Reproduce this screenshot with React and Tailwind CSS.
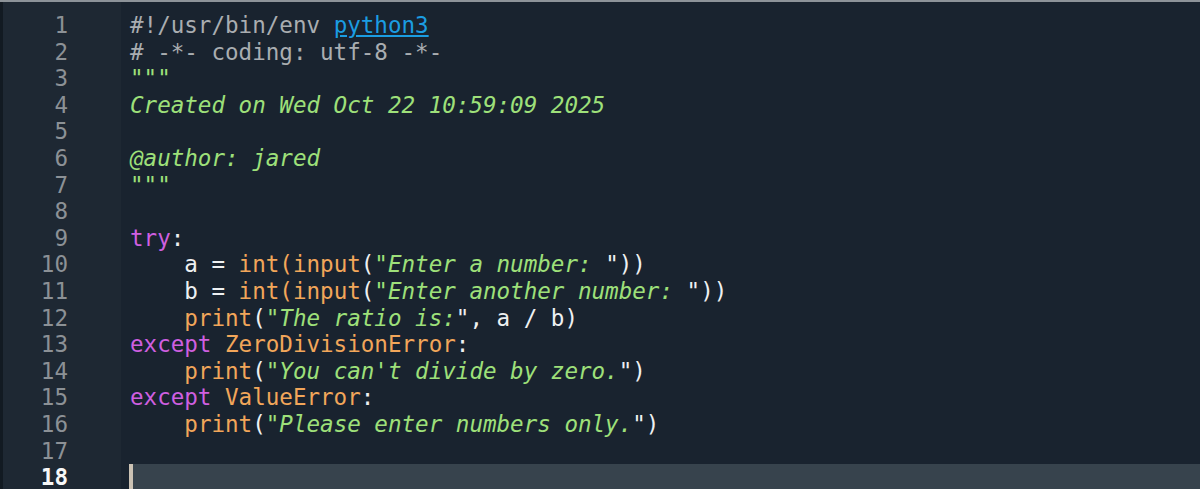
import React from 'react';

// token colours taken from the editor theme
const C = {
  cmt: 'text-[#a9adb1]',
  link: 'text-[#1b9de2] underline underline-offset-2',
  str: 'text-[#9ee07a] italic',
  kw: 'text-[#cf5fe0]',
  fn: 'text-[#f2a65a]',
  txt: 'text-[#eef0f2]',
};

const lines = [
  [['#!/usr/bin/env ', C.cmt], ['python3', C.link]],
  [['# -*- coding: utf-8 -*-', C.cmt]],
  [['"""', C.str]],
  [['Created on Wed Oct 22 10:59:09 2025', C.str]],
  [],
  [['@author: jared', C.str]],
  [['"""', C.str]],
  [],
  [['try', C.kw], [':', C.txt]],
  [['    a = ', C.txt], ['int(input', C.fn], ['(', C.txt], ['"Enter a number: ', C.str], ['"))', C.txt]],
  [['    b = ', C.txt], ['int(input', C.fn], ['(', C.txt], ['"Enter another number: ', C.str], ['"))', C.txt]],
  [['    ', C.txt], ['print', C.fn], ['(', C.txt], ['"The ratio is:', C.str], ['", a / b)', C.txt]],
  [['except', C.kw], [' ZeroDivisionError', C.fn], [':', C.txt]],
  [['    ', C.txt], ['print', C.fn], ['(', C.txt], ["\"You can't divide by zero.", C.str], ['")', C.txt]],
  [['except', C.kw], [' ValueError', C.fn], [':', C.txt]],
  [['    ', C.txt], ['print', C.fn], ['(', C.txt], ['"Please enter numbers only.', C.str], ['")', C.txt]],
  [],
  [],
];

const current = 18;

const App = () => {
  return (
    <div
      className="flex h-[489px] w-full overflow-hidden bg-[#19232f] border-t-2 border-[#8d9399] text-[22.55px] leading-[26.6px]"
      style={{ fontFamily: '"DejaVu Sans Mono", "Liberation Mono", monospace' }}
    >
      {/* left edge strip */}
      <div className="w-[3px] shrink-0 bg-[#121a22]" />

      {/* line numbers gutter */}
      <div className="w-[118px] shrink-0 bg-[#1e2833] pt-[10px]">
        {lines.map((_, i) => (
          <div
            key={i}
            className={
              i + 1 === current
                ? 'w-[65px] text-right whitespace-pre text-[#f7f7f7] font-semibold'
                : 'w-[65px] text-right whitespace-pre text-[#8c9196]'
            }
          >
            {i + 1}
          </div>
        ))}
      </div>

      {/* code */}
      <div className="flex-1 pt-[10px] pl-[8px]">
        {lines.map((tokens, i) => (
          <div
            key={i}
            className={
              i + 1 === current
                ? 'h-[26.6px] whitespace-pre bg-[#37434d] border-l-4 border-[#cbc2b4]'
                : 'h-[26.6px] whitespace-pre pl-[1px]'
            }
          >
            {tokens.map(([text, cls], j) => (
              <span key={j} className={cls}>
                {text}
              </span>
            ))}
          </div>
        ))}
      </div>
    </div>
  );
};

export default App;
